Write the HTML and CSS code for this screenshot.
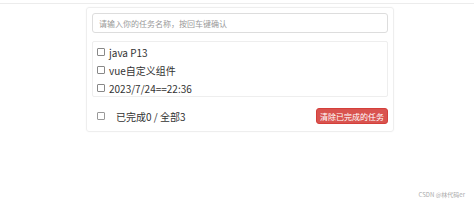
FILE: index.html
```html
<!DOCTYPE html>
<html>
<head>
    <meta charset="UTF-8">
    <title>Todo</title>
    <link rel="stylesheet" href="styles.css">
</head>
<body>
    <div class="topline"></div>
    <div class="todoCard">
        <input class="newTask" type="text" placeholder="请输入你的任务名称，按回车键确认">
        <ul class="todoList">
            <li><label><input type="checkbox"><span>java P13</span></label></li>
            <li><label><input type="checkbox"><span>vue自定义组件</span></label></li>
            <li><label><input type="checkbox"><span>2023/7/24==22:36</span></label></li>
        </ul>
        <div class="todoFooter">
            <label><input type="checkbox"></label>
            <span class="count">已完成0 / 全部3</span>
            <button class="btnDanger">清除已完成的任务</button>
        </div>
    </div>
    <div class="mark">CSDN @林代码er</div>
</body>
</html>
```

FILE: styles.css
```css
body {
    margin: 0;
    width: 474px;
    height: 203px;
    position: relative;
    font-family: "Noto Sans CJK SC", "Noto Sans", sans-serif;
    color: #333;
    background: #fff;
}
.topline {
    height: 1px;
    margin-top: 3px;
    background: #ececec;
}
.todoCard {
    width: 296px;
    margin: 3px 0 0 86px;
    padding: 5px 5px 7px 5px;
    border: 1px solid #eee;
    border-radius: 3px;
    box-shadow: 0 0 2px rgba(0, 0, 0, 0.04);
}
.newTask {
    display: block;
    box-sizing: border-box;
    width: 296px;
    height: 20px;
    margin: 0;
    padding: 0 6px;
    border: 1px solid #ddd;
    border-radius: 3px;
    font-family: inherit;
    font-size: 8px;
    outline: none;
}
.newTask::placeholder {
    color: #999;
}
.todoList {
    list-style: none;
    margin: 8px 0 0 0;
    padding: 1px 4px 1px 4px;
    border: 1px solid #eee;
    border-radius: 2px;
    height: 52px;
}
.todoList li {
    height: 18px;
    display: flex;
    align-items: center;
    font-size: 10px;
}
.todoList label, .todoFooter label {
    display: flex;
    align-items: center;
}
input[type="checkbox"] {
    appearance: none;
    -webkit-appearance: none;
    box-sizing: border-box;
    width: 8px;
    height: 8px;
    margin: 0 4px 0 0;
    border: 1px solid #888;
    border-radius: 1px;
    background: #fff;
}
.todoFooter {
    display: flex;
    align-items: center;
    height: 16px;
    margin-top: 11px;
    padding-left: 5px;
    font-size: 10px;
}
.todoFooter input[type="checkbox"] {
    border-color: #999;
}
.count {
    margin-left: 7px;
}
.btnDanger {
    margin-left: auto;
    width: 72px;
    height: 16px;
    padding: 0;
    border: 1px solid #d43f3a;
    border-radius: 3px;
    background: #d9534f;
    color: #fff;
    font-family: inherit;
    font-size: 8px;
}
.mark {
    position: absolute;
    right: 9px;
    bottom: 4px;
    font-size: 6px;
    color: #aaa;
}
```
